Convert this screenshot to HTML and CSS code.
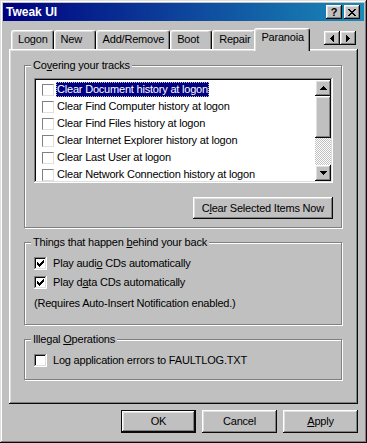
FILE: index.html
```html
<!DOCTYPE html>
<html lang="en">
<head>
  <meta charset="UTF-8">
  <meta name="viewport" content="width=device-width, initial-scale=1.0">
  <title>Tweak UI</title>
  <link rel="stylesheet" href="styles.css">
</head>
<body>
  <div class="window">
    <div class="titlebar">
      <span class="title">Tweak UI</span>
      <div class="caption-btns">
        <button class="btn cap-btn">?</button>
        <button class="btn cap-btn">
          <svg width="8" height="7" viewBox="0 0 8 7" shape-rendering="crispEdges"><path d="M0 0h2v1h-2z M6 0h2v1h-2z M1 1h2v1h-2z M5 1h2v1h-2z M2 2h4v1h-4z M3 3h2v1h-2z M2 4h4v1h-4z M1 5h2v1h-2z M5 5h2v1h-2z M0 6h2v1h-2z M6 6h2v1h-2z" fill="#000"/></svg>
        </button>
      </div>
    </div>
    <div class="content">
      <div class="tabstrip">
        <div class="tab">Logon</div>
        <div class="tab">New</div>
        <div class="tab">Add/Remove</div>
        <div class="tab">Boot</div>
        <div class="tab">Repair</div>
        <div class="tab selected">Paranoia</div>
        <div class="tab-scroll">
          <button class="btn arrow-btn">
            <svg width="4" height="7" viewBox="0 0 4 7" shape-rendering="crispEdges"><path d="M3 0h1v7h-1v-1h-1v-1h-1v-1h-1v-1h1v-1h1v-1h1z" fill="#000"/></svg>
          </button>
          <button class="btn arrow-btn">
            <svg width="4" height="7" viewBox="0 0 4 7" shape-rendering="crispEdges"><path d="M0 0h1v1h1v1h1v1h1v1h-1v1h-1v1h-1v1h-1z" fill="#000"/></svg>
          </button>
        </div>
      </div>

      <div class="panel">
        <fieldset class="group tracks">
          <legend>Co<u>v</u>ering your tracks</legend>
          <div class="listbox">
            <ul class="items">
              <li><span class="box"></span><span class="label selected">Clear Document history at logon</span></li>
              <li><span class="box"></span><span class="label">Clear Find Computer history at logon</span></li>
              <li><span class="box"></span><span class="label">Clear Find Files history at logon</span></li>
              <li><span class="box"></span><span class="label">Clear Internet Explorer history at logon</span></li>
              <li><span class="box"></span><span class="label">Clear Last User at logon</span></li>
              <li><span class="box"></span><span class="label">Clear Network Connection history at logon</span></li>
            </ul>
            <div class="scrollbar">
              <div class="btn sb-btn">
                <svg width="7" height="4" viewBox="0 0 7 4" shape-rendering="crispEdges"><path d="M3 0h1v1h1v1h1v1h1v1h-7v-1h1v-1h1v-1h1z" fill="#000"/></svg>
              </div>
              <div class="btn sb-thumb"></div>
              <div class="sb-track"></div>
              <div class="btn sb-btn">
                <svg width="7" height="4" viewBox="0 0 7 4" shape-rendering="crispEdges"><path d="M0 0h7v1h-1v1h-1v1h-1v1h-1v-1h-1v-1h-1v-1h-1z" fill="#000"/></svg>
              </div>
            </div>
          </div>
          <div class="group-actions">
            <button class="btn clear-btn">C<u>l</u>ear Selected Items Now</button>
          </div>
        </fieldset>

        <fieldset class="group behind">
          <legend>Things that happen <u>b</u>ehind your back</legend>
          <div class="check">
            <span class="cb checked"><svg width="7" height="7" viewBox="0 0 7 7" shape-rendering="crispEdges"><path d="M6 0h1v1h-1z M5 1h2v1h-2z M0 2h1v1h-1z M4 2h3v1h-3z M0 3h2v1h-2z M3 3h3v1h-3z M0 4h5v1h-5z M1 5h3v1h-3z M2 6h1v1h-1z" fill="#000"/></svg></span>
            <span>Play audi<u>o</u> CDs automatically</span>
          </div>
          <div class="check">
            <span class="cb checked"><svg width="7" height="7" viewBox="0 0 7 7" shape-rendering="crispEdges"><path d="M6 0h1v1h-1z M5 1h2v1h-2z M0 2h1v1h-1z M4 2h3v1h-3z M0 3h2v1h-2z M3 3h3v1h-3z M0 4h5v1h-5z M1 5h3v1h-3z M2 6h1v1h-1z" fill="#000"/></svg></span>
            <span>Play d<u>a</u>ta CDs automatically</span>
          </div>
          <p class="note">(Requires Auto-Insert Notification enabled.)</p>
        </fieldset>

        <fieldset class="group illegal">
          <legend>Illegal <u>O</u>perations</legend>
          <div class="check">
            <span class="cb"></span>
            <span>Log application errors to FAULTLOG.TXT</span>
          </div>
        </fieldset>
      </div>

      <div class="dialog-btns">
        <button class="btn push default">OK</button>
        <button class="btn push">Cancel</button>
        <button class="btn push"><u>A</u>pply</button>
      </div>
    </div>
  </div>
</body>
</html>
```

FILE: styles.css
```css
* {
  box-sizing: border-box;
}
body {
  margin: 0;
  background: #c0c0c0;
  font-family: "Liberation Sans", Arial, sans-serif;
  font-size: 11px;
  line-height: 13px;
  letter-spacing: -0.2px;
  color: #000;
}
.window {
  width: 367px;
  height: 443px;
  padding: 3px;
  display: flex;
  flex-direction: column;
  background: #c0c0c0;
  box-shadow: inset -1px -1px #0a0a0a, inset 1px 1px #dfdfdf, inset -2px -2px #808080, inset 2px 2px #fff;
}
.titlebar {
  height: 18px;
  display: flex;
  align-items: center;
  justify-content: space-between;
  padding: 0 4px 0 3px;
  background: linear-gradient(to right, #000080, #1a8ab8);
}
.title {
  color: #fff;
  font-weight: bold;
  font-size: 12px;
  letter-spacing: 0;
}
.caption-btns {
  display: flex;
  gap: 2px;
}
.btn {
  font: inherit;
  letter-spacing: inherit;
  color: #000;
  background: #c0c0c0;
  border: 0;
  margin: 0;
  padding: 0;
  display: flex;
  align-items: center;
  justify-content: center;
  box-shadow: inset -1px -1px #0a0a0a, inset 1px 1px #fff, inset -2px -2px #808080, inset 2px 2px #dfdfdf;
}
.cap-btn {
  width: 16px;
  height: 14px;
  font-weight: bold;
  font-size: 11px;
}
.content {
  flex: 1;
  display: flex;
  flex-direction: column;
  padding: 7px 6px 7px;
}

/* tabs */
.tabstrip {
  display: flex;
  align-items: flex-end;
  height: 21px;
  padding: 0 2px;
}
.tab {
  height: 19px;
  min-width: 42px;
  padding: 2px 5px 0 6px;
  border: 1px solid;
  border-color: #fff #0a0a0a transparent #fff;
  border-bottom: 0;
  border-radius: 3px 3px 0 0;
  box-shadow: inset -1px 0 #808080, inset 1px 1px #dfdfdf;
  white-space: nowrap;
}
.tab.selected {
  position: relative;
  z-index: 1;
  height: 23px;
  margin: 0 -2px -2px;
  padding-top: 2px;
  background: #c0c0c0;
}
.tab-scroll {
  margin-left: auto;
  align-self: flex-start;
  margin-top: 3px;
  display: flex;
}
.arrow-btn {
  width: 16px;
  height: 14px;
}

/* panel */
.panel {
  flex: 1;
  padding: 10px 16px 0 15px;
  box-shadow: inset -1px -1px #0a0a0a, inset 1px 1px #fff, inset -2px -2px #808080, inset 2px 2px #dfdfdf;
}
.group {
  margin: 0;
  min-width: 0;
  border: 1px solid #808080;
  box-shadow: 1px 1px 0 #fff, inset 1px 1px 0 #fff;
  padding: 6px 8px 8px 9px;
}
.group legend {
  padding: 0 2px;
  margin-left: -3px;
  background: #c0c0c0;
}
.group + .group {
  margin-top: 8px;
}
.behind {
  padding-top: 5px;
  padding-bottom: 14px;
}
.illegal {
  padding-top: 5px;
  padding-bottom: 9px;
}

/* list with checkboxes */
.listbox {
  height: 105px;
  padding: 2px;
  display: flex;
  background: #fff;
  box-shadow: inset -1px -1px #fff, inset 1px 1px #808080, inset -2px -2px #dfdfdf, inset 2px 2px #0a0a0a;
}
.items {
  flex: 1;
  margin: 0;
  padding: 1px 0 0;
  list-style: none;
  overflow: hidden;
}
.items li {
  height: 17px;
  display: flex;
  align-items: center;
  padding-left: 6px;
  white-space: nowrap;
}
.box {
  width: 12px;
  height: 12px;
  flex: none;
  background: #fff;
  border: 1px solid;
  border-color: #808080 #dfdfdf #dfdfdf #808080;
}
.label {
  margin-left: 2px;
  padding: 1px 1px;
}
.label.selected {
  background: #000080;
  color: #fff;
  outline: 1px dotted #c0c0c0;
  outline-offset: -1px;
}
.scrollbar {
  width: 16px;
  display: flex;
  flex-direction: column;
}
.sb-btn {
  height: 16px;
  flex: none;
}
.sb-thumb {
  height: 42px;
  flex: none;
}
.sb-track {
  flex: 1;
  background: repeating-conic-gradient(#c0c0c0 0 25%, #fff 0 50%) 0 0 / 2px 2px;
}
.group-actions {
  display: flex;
  justify-content: flex-end;
  margin-top: 14px;
}
.clear-btn {
  height: 22px;
  padding: 0 9px;
}

/* checkboxes */
.check {
  height: 19px;
  display: flex;
  align-items: center;
  gap: 6px;
}
.cb {
  width: 13px;
  height: 13px;
  flex: none;
  display: flex;
  align-items: center;
  justify-content: center;
  background: #fff;
  box-shadow: inset -1px -1px #fff, inset 1px 1px #808080, inset -2px -2px #dfdfdf, inset 2px 2px #0a0a0a;
}
.note {
  margin: 5px 0 0;
}

/* dialog buttons */
.dialog-btns {
  display: flex;
  justify-content: flex-end;
  gap: 6px;
  margin-top: 6px;
}
.push {
  width: 75px;
  height: 23px;
}
.push.default {
  box-shadow: inset -1px -1px #0a0a0a, inset 1px 1px #0a0a0a, inset -2px -2px #0a0a0a, inset 2px 2px #fff, inset -3px -3px #808080, inset 3px 3px #dfdfdf;
}
```
